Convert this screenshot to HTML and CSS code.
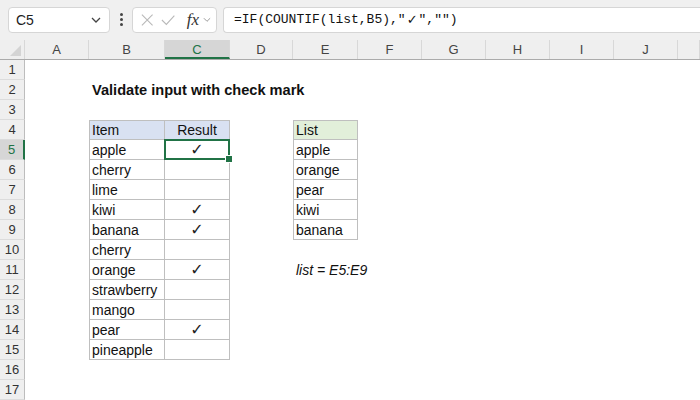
FILE: index.html
```html
<!DOCTYPE html>
<html lang="en">
<head>
  <meta charset="UTF-8" />
  <title>Validate input with check mark</title>
  <link rel="stylesheet" href="styles.css">
</head>
<body>
  <!-- formula bar -->
  <div class="toolbar">
    <div class="namebox">
      <span>C5</span>
      <svg class="chev" width="10" height="6" viewBox="0 0 10 6"><path d="M1 1 L5 5 L9 1" fill="none" stroke="#444" stroke-width="1.3"/></svg>
    </div>
    <div class="dots"><i></i><i></i><i></i></div>
    <div class="fbtns">
      <svg width="14" height="14" viewBox="0 0 14 14"><path d="M1 1 L13 13 M13 1 L1 13" stroke="#b8b8b8" stroke-width="1.2"/></svg>
      <svg width="16" height="12" viewBox="0 0 16 12"><path d="M1 6 L6 11 L15 1" fill="none" stroke="#b8b8b8" stroke-width="1.2"/></svg>
      <span class="fx">fx</span>
      <svg width="9" height="6" viewBox="0 0 9 6"><path d="M1 1 L4.5 4.5 L8 1" fill="none" stroke="#999" stroke-width="1.1"/></svg>
    </div>
    <div class="formula">=IF(COUNTIF(list,B5),"<span class="tick">✓</span>","")</div>
  </div>

  <div class="sheet">
    <div class="row head">
      <div class="rh corner"></div>
      <div class="c a">A</div><div class="c b">B</div><div class="c cc sel">C</div><div class="c d">D</div>
      <div class="c e">E</div><div class="c f">F</div><div class="c g">G</div><div class="c h">H</div>
      <div class="c i">I</div><div class="c j">J</div><div class="c k"></div>
    </div>

    <div class="row"><div class="rh">1</div></div>
    <div class="row"><div class="rh">2</div><div class="c a"></div><div class="c b title">Validate input with check mark</div></div>
    <div class="row"><div class="rh">3</div></div>
    <div class="row"><div class="rh">4</div><div class="c a"></div>
      <div class="c b bx top first thead">Item</div><div class="c cc bx top thead mid">Result</div>
      <div class="c d"></div><div class="c e bx top first lhead">List</div></div>
    <div class="row"><div class="rh sel">5</div><div class="c a"></div>
      <div class="c b bx first">apple</div><div class="c cc bx mid active">✓</div>
      <div class="c d"></div><div class="c e bx first">apple</div></div>
    <div class="row"><div class="rh">6</div><div class="c a"></div>
      <div class="c b bx first">cherry</div><div class="c cc bx mid"></div>
      <div class="c d"></div><div class="c e bx first">orange</div></div>
    <div class="row"><div class="rh">7</div><div class="c a"></div>
      <div class="c b bx first">lime</div><div class="c cc bx mid"></div>
      <div class="c d"></div><div class="c e bx first">pear</div></div>
    <div class="row"><div class="rh">8</div><div class="c a"></div>
      <div class="c b bx first">kiwi</div><div class="c cc bx mid">✓</div>
      <div class="c d"></div><div class="c e bx first">kiwi</div></div>
    <div class="row"><div class="rh">9</div><div class="c a"></div>
      <div class="c b bx first">banana</div><div class="c cc bx mid">✓</div>
      <div class="c d"></div><div class="c e bx first">banana</div></div>
    <div class="row"><div class="rh">10</div><div class="c a"></div>
      <div class="c b bx first">cherry</div><div class="c cc bx mid"></div></div>
    <div class="row"><div class="rh">11</div><div class="c a"></div>
      <div class="c b bx first">orange</div><div class="c cc bx mid">✓</div>
      <div class="c d"></div><div class="c e note">list = E5:E9</div></div>
    <div class="row"><div class="rh">12</div><div class="c a"></div>
      <div class="c b bx first">strawberry</div><div class="c cc bx mid"></div></div>
    <div class="row"><div class="rh">13</div><div class="c a"></div>
      <div class="c b bx first">mango</div><div class="c cc bx mid"></div></div>
    <div class="row"><div class="rh">14</div><div class="c a"></div>
      <div class="c b bx first">pear</div><div class="c cc bx mid">✓</div></div>
    <div class="row"><div class="rh">15</div><div class="c a"></div>
      <div class="c b bx first">pineapple</div><div class="c cc bx mid"></div></div>
    <div class="row"><div class="rh">16</div></div>
    <div class="row"><div class="rh">17</div></div>
  </div>
</body>
</html>
```

FILE: styles.css
```css
* {
  margin: 0;
  padding: 0;
  box-sizing: border-box;
}

body {
  width: 700px;
  height: 400px;
  overflow: hidden;
  background: #fff;
  font-family: "Liberation Sans", Arial, sans-serif;
  color: #111;
}

/* ---------- formula bar ---------- */

.toolbar {
  height: 40px;
  background: #f0f0f0;
  display: flex;
  align-items: center;
  padding-left: 8px;
  padding-bottom: 1px;
}

.namebox,
.fbtns,
.formula {
  height: 26px;
  background: #fff;
  border: 1px solid #d6d6d6;
  border-radius: 4px;
  display: flex;
  align-items: center;
}

.namebox {
  width: 102px;
  padding: 0 8px 0 7px;
  justify-content: space-between;
  font-size: 14px;
  color: #222;
}

.dots {
  width: 22px;
  display: flex;
  flex-direction: column;
  align-items: center;
  gap: 2px;
}

.dots i {
  width: 3px;
  height: 3px;
  background: #444;
  border-radius: 50%;
}

.fbtns {
  width: 85px;
  padding: 0 5px 0 8px;
  gap: 8px;
}

.fx {
  font-family: "Liberation Serif", serif;
  font-style: italic;
  font-size: 17px;
  color: #333;
  margin-left: 3px;
  margin-right: -4px;
}

.formula {
  flex: 1;
  margin-left: 6px;
  border-right: none;
  border-radius: 4px 0 0 4px;
  padding-left: 10px;
  font-family: "Liberation Mono", monospace;
  font-size: 13px;
  color: #111;
  white-space: pre;
}

.formula .tick {
  font-family: "DejaVu Sans", sans-serif;
  font-size: 13px;
  padding: 0 1px;
}

/* ---------- grid ---------- */

.row {
  display: flex;
  height: 20px;
}

.rh {
  width: 25px;
  flex: none;
  background: #efefef;
  border-right: 1px solid #bdbdbd;
  border-bottom: 1px solid #dcdcdc;
  text-align: center;
  font-size: 13px;
  line-height: 20px;
  color: #333;
}

.rh.sel {
  background: #d6d6d6;
  border-right: 2px solid #217346;
  color: #217346;
}

.c {
  flex: none;
  height: 20px;
  font-size: 14px;
  line-height: 20px;
  padding: 0 3px;
  white-space: nowrap;
}

.a { width: 64px; }
.b { width: 76px; }
.cc { width: 65px; }
.d { width: 63px; }
.e { width: 65px; }
.f { width: 64px; }
.g { width: 64px; }
.h { width: 64px; }
.i { width: 64px; }
.j { width: 64px; }
.k { width: 22px; }

/* column letters */
.head {
  background: #efefef;
  border-bottom: 1px solid #ababab;
}

.head .c {
  height: 19px;
  line-height: 19px;
  text-align: center;
  font-size: 13px;
  color: #444;
  border-right: 1px solid #d8d8d8;
}

.head .c.sel {
  background: #d6d6d6;
  color: #217346;
  border-bottom: 2px solid #217346;
}

.head .corner {
  height: 19px;
  border-bottom: none;
  border-right: 1px solid #d8d8d8;
  position: relative;
}

.corner::after {
  content: "";
  position: absolute;
  right: 3px;
  bottom: 3px;
  border-left: 11px solid transparent;
  border-bottom: 11px solid #d4d4d4;
}

/* bordered tables */
.bx {
  border-right: 1px solid #bfbfbf;
  border-bottom: 1px solid #bfbfbf;
}

.bx.first { border-left: 1px solid #bfbfbf; }
.bx.top { border-top: 1px solid #bfbfbf; }

.b.first { padding-left: 2px; }
.e.first { padding-left: 2px; }

.mid {
  text-align: center;
  font-family: "DejaVu Sans", sans-serif;
  font-size: 16px;
  line-height: 19px;
  color: #222;
}

.thead {
  background: #d9e1f2;
  font-family: "Liberation Sans", Arial, sans-serif;
  font-size: 14px;
  line-height: 18px;
  color: #111;
}

.lhead {
  background: #e2efda;
  line-height: 18px;
}

.title {
  font-weight: bold;
  font-size: 14.6px;
  padding-left: 3px;
  overflow: visible;
}

.note {
  font-style: italic;
  padding-left: 3px;
  overflow: visible;
}

/* active cell */
.active {
  position: relative;
}

.active::before {
  content: "";
  position: absolute;
  left: -1px;
  top: -1px;
  right: -1px;
  bottom: -1px;
  border: 2px solid #217346;
}

.active::after {
  content: "";
  position: absolute;
  right: -4px;
  bottom: -4px;
  width: 6px;
  height: 6px;
  background: #217346;
  border: 1px solid #fff;
}
```
